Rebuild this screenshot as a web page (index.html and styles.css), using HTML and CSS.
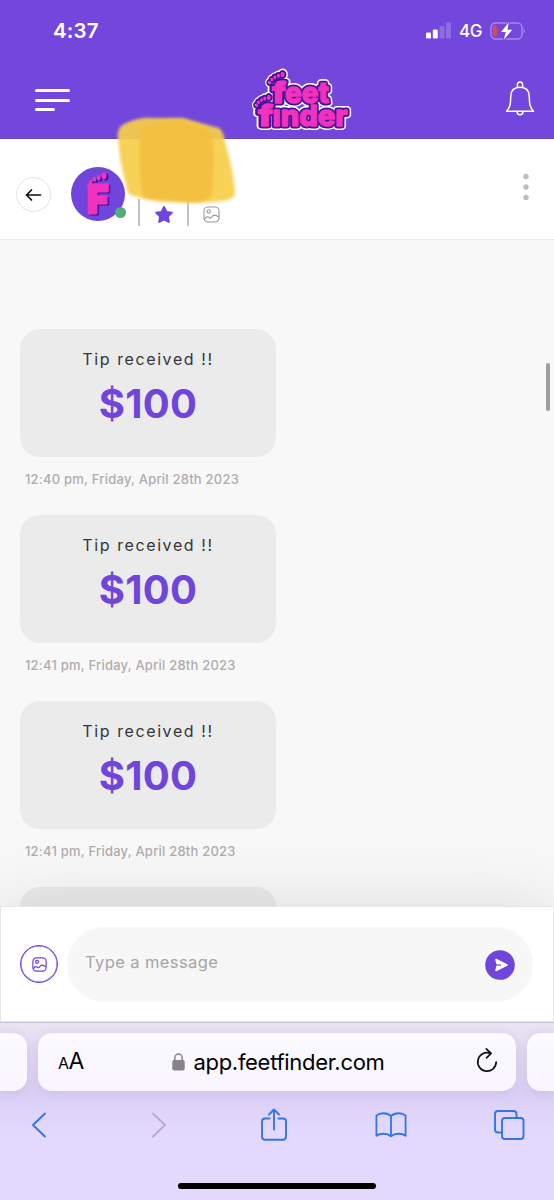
FILE: index.html
```html
<!DOCTYPE html>
<html lang="en">
<head>
<meta charset="utf-8">
<title>FeetFinder messages</title>
<link rel="stylesheet" href="styles.css">
</head>
<body>
<div class="phone">
  <header class="top">
    <div class="status">
      <span class="clock">4:37</span>
      <div class="status-right">
        <svg width="26" height="17" viewBox="0 0 26 17" fill="#fff"><rect x="0" y="10.5" width="5" height="6" rx="1.2"/><rect x="6.8" y="7.5" width="5" height="9" rx="1.2"/><g opacity=".2"><rect x="13.5" y="4" width="5" height="12.5" rx="1.2"/><rect x="20" y=".5" width="5" height="16" rx="1.2"/></g></svg>
        <span class="network">4G</span>
        <svg width="36" height="20" viewBox="0 0 36 20"><rect x="1" y="2" width="31" height="16" rx="4.5" fill="none" stroke="#a68be8" stroke-width="1.4"/><path d="M33.5 7.5q3 2.5 0 5z" fill="#a68be8"/><rect x="3" y="4.2" width="3.7" height="11.6" rx="1.8" fill="#e9493e"/><path d="M19 1.3 11 11h4.7L13.8 18.7 22.2 8.8h-4.8z" fill="#fff" stroke="#7347dc" stroke-width="2.4" paint-order="stroke"/></svg>
      </div>
    </div>
    <nav class="brandbar">
      <div class="burger"><i></i><i></i><i></i></div>
      <svg class="logo" width="104" height="70" viewBox="250 64 104 70">
        <defs>
          <g id="wordmark">
            <ellipse cx="269.800" cy="82.500" rx=".7" ry="1"/><ellipse cx="271.900" cy="79.600" rx=".8" ry="1.100"/><ellipse cx="274.900" cy="77.300" rx=".9" ry="1.200"/><ellipse cx="278.400" cy="75.800" rx="1" ry="1.400"/><ellipse cx="282.600" cy="74.500" rx="1.400" ry="2"/>
            <ellipse cx="256.600" cy="105" rx=".7" ry="1"/><ellipse cx="258.500" cy="102.200" rx=".8" ry="1.100"/><ellipse cx="261.400" cy="100" rx=".9" ry="1.200"/><ellipse cx="264.800" cy="98.600" rx="1" ry="1.400"/><ellipse cx="268.800" cy="97.400" rx="1.300" ry="1.900"/>
            <text x="272" y="103" font-size="29" textLength="14" lengthAdjust="spacingAndGlyphs">f</text>
            <text x="285" y="103" font-size="29" textLength="44" lengthAdjust="spacingAndGlyphs">eet</text>
            <text x="258" y="126" font-size="28" textLength="15" lengthAdjust="spacingAndGlyphs">f</text>
            <text x="272.500" y="126" font-size="29" textLength="75" lengthAdjust="spacingAndGlyphs">ınder</text>
          </g>
        </defs>
        <g class="logo-type">
          <use href="#wordmark" fill="#fff" stroke="#fff" stroke-width="7.800"/>
          <use href="#wordmark" fill="#42109a" stroke="#42109a" stroke-width="5"/>
          <use href="#wordmark" fill="#f032bd" stroke="#f032bd" stroke-width="1.300"/>
        </g>
      </svg>
      <svg class="bell" width="30" height="36" viewBox="0 0 30 36" fill="none" stroke="#fff" stroke-width="1.5" stroke-linejoin="round"><path d="M12.4 6.2V3.7a2.6 2.6 0 0 1 5.2 0v2.5M1.500 30.200c3.400-3.700 4.200-6.600 4.200-14.500C5.700 9.500 9 6.200 15 6.200s9.300 3.300 9.300 9.500c0 7.900.8 10.800 4.200 14.500zM12 30.500a3 3.200 0 0 0 6 0"/></svg>
    </nav>
  </header>

  <section class="contact">
    <button class="back"><svg width="17" height="14" viewBox="0 0 17 14" fill="none" stroke="#111" stroke-width="1.7" stroke-linecap="round" stroke-linejoin="round"><path d="M15.500 7H1.500M6.500 2l-5 5 5 5"/></svg></button>
    <div class="avatar">
      <svg width="54" height="54" viewBox="0 0 54 54">
        <defs><g id="foot"><g stroke-width=".4"><ellipse cx="17.500" cy="18.200" rx="1.200" ry="2"/><ellipse cx="20" cy="14.900" rx="1.400" ry="2.100"/><ellipse cx="23.500" cy="12.300" rx="1.700" ry="2.300"/><ellipse cx="27.700" cy="10.600" rx="1.900" ry="2.600"/><ellipse cx="33" cy="8.800" rx="2.500" ry="3.400"/></g><text x="16" y="45.500" font-size="38" textLength="21" lengthAdjust="spacingAndGlyphs">F</text></g></defs>
        <circle cx="27" cy="27" r="27" fill="#7045db"/>
        <g class="avatar-type"><use href="#foot" x="1.800" y="1.200" fill="#42109a" stroke="#42109a" stroke-width="3"/><use href="#foot" fill="#f032bd" stroke="#f032bd" stroke-width="3"/></g>
      </svg>
      <i class="online"></i>
    </div>
    <div class="tools">
      <i class="divider"></i>
      <svg width="20" height="19" viewBox="0 0 20 19"><path d="M10 2l2.400 4.900 5.400.8-3.900 3.800.9 5.400L10 14.400l-4.800 2.500.9-5.400-3.900-3.800 5.400-.8z" fill="#7045db" stroke="#7045db" stroke-width="2" stroke-linejoin="round"/></svg>
      <i class="divider"></i>
      <svg width="17" height="17" viewBox="0 0 17 17" fill="none" stroke="#999" stroke-width="1.100"><rect x="1" y="1" width="15" height="15" rx="4"/><circle cx="5.700" cy="5.500" r="1.700"/><path d="M1.300 13.500c2-3 3.600-3.500 5.200-1.500 1.300.7 1.900-.6 3-2 1.600-1.700 3-1.400 6.300 1"/></svg>
    </div>
    <svg class="more" width="6" height="28" viewBox="0 0 6 28" fill="#bdbdbd"><circle cx="3" cy="3.500" r="2.700"/><circle cx="3" cy="14" r="2.700"/><circle cx="3" cy="24.500" r="2.700"/></svg>
    <svg class="scribble" width="130" height="104" viewBox="112 108 130 104">
      <defs><filter id="soft"><feGaussianBlur stdDeviation="1.500"/></filter></defs>
      <path d="M118 139Q116 127 126 123Q140 117 153 118L183 118Q204 124 219 128Q224 132 225 142Q233 168 235 192Q235 200 222 201Q200 204 174 202Q151 202 134 196Q126 194 126 184Q120 165 118 139Z" fill="#f8cf4b" opacity=".93" filter="url(#soft)"/>
      <path d="M140 130Q155 119 183 120Q207 126 213 139Q215 165 212 192Q211 203 190 202Q155 200 143 197Q138 170 140 130Z" fill="#f3bf40" opacity=".93" filter="url(#soft)"/>
    </svg>
  </section>

  <main class="messages">
    <article class="message"><div class="tip"><p>Tip received !!</p><strong>$100</strong></div><time>12:40 pm, Friday, April 28th 2023</time></article>
    <article class="message"><div class="tip"><p>Tip received !!</p><strong>$100</strong></div><time>12:41 pm, Friday, April 28th 2023</time></article>
    <article class="message"><div class="tip"><p>Tip received !!</p><strong>$100</strong></div><time>12:41 pm, Friday, April 28th 2023</time></article>
    <article class="message"><div class="tip"></div></article>
    <i class="scrollbar"></i>
  </main>

  <section class="composer">
    <button class="attach"><svg width="15" height="15" viewBox="0 0 17 17" fill="none" stroke="#7045db" stroke-width="1.400"><rect x="1" y="1" width="15" height="15" rx="4"/><circle cx="5.700" cy="5.500" r="1.700"/><path d="M1.300 13.500c2-3 3.600-3.500 5.200-1.500 1.300.7 1.900-.6 3-2 1.600-1.700 3-1.400 6.300 1"/></svg></button>
    <div class="field"><span>Type a message</span>
      <svg width="30" height="30" viewBox="0 0 30 30"><circle cx="15" cy="15" r="14.800" fill="#7045db"/><path d="M11 9.500 22 15 11 20.500l1.200-4.700 4.300-.8-4.300-.8z" fill="#fff" stroke="#fff" stroke-width="1.600" stroke-linejoin="round"/><path d="M10.500 15h5.500" stroke="#7045db" stroke-width="1.200"/></svg>
    </div>
  </section>

  <footer class="browser">
    <div class="tabs">
      <div class="tab-edge left"></div>
      <div class="address">
        <span class="aa"><small>A</small>A</span>
        <div class="url"><svg width="13" height="18" viewBox="0 0 13 18"><rect x=".3" y="7" width="12.400" height="10.500" rx="1.800" fill="#85828b"/><path d="M2.800 8V4.800a3.700 3.700 0 0 1 7.400 0V8" fill="none" stroke="#85828b" stroke-width="1.500"/></svg><span>app.feetfinder.com</span></div>
        <svg class="reload" width="22" height="26" viewBox="0 0 22 26" fill="none" stroke="#111" stroke-width="1.700" stroke-linecap="round" stroke-linejoin="round"><path d="M14.200 6.300A9.200 9.200 0 1 0 20.200 15M10.300 1.800l4.800 4.500-4.500 4.500"/></svg>
      </div>
      <div class="tab-edge right"></div>
    </div>
    <div class="actions">
      <svg width="16" height="26" viewBox="0 0 16 26"><path d="M14 1.500 2 13l12 11.500"/></svg>
      <svg class="disabled" width="16" height="26" viewBox="0 0 16 26"><path d="M2 1.500 14 13 2 24.500"/></svg>
      <svg width="26" height="34" viewBox="0 0 26 34"><path d="M8.500 10.500H4Q1 10.500 1 13.500v15Q1 31.700 4 31.700h18q3 0 3-3.200v-15q0-3-3-3h-4.500M13 21.500V1.500M8 6.500l5-5 5 5"/></svg>
      <svg width="32" height="28" viewBox="0 0 34 28"><path d="M17 4.500C13 .6 5 .6 1.500 4v21.500c4-3 11.500-3 15.500.5 4-3.500 11.500-3.500 15.500-.5V4C29 .6 21 .6 17 4.500V26"/></svg>
      <svg width="32" height="32" viewBox="0 0 32 32"><rect x="9" y="9" width="21.500" height="21" rx="3"/><path d="M8.500 23.500H5q-3 0-3-3V5q0-3 3-3h15.500q3 0 3 3v3.500"/></svg>
    </div>
    <i class="home"></i>
  </footer>
</div>
</body>
</html>
```
FILE: styles.css
```css
* { box-sizing: border-box; }
body { margin: 0; font-family: Inter, sans-serif; }
button { padding: 0; background: #fff; }
svg { display: block; flex: none; }
.phone { width: 554px; height: 1200px; display: flex; flex-direction: column; overflow: hidden; background: #f8f8f8; }

.top { height: 139px; flex: none; background: #7347dc; color: #fff; border-bottom: 1px solid #6845bf; }
.status { height: 61px; padding: 0 28px 0 53px; display: flex; align-items: center; justify-content: space-between; }
.clock { font-size: 20.500px; font-weight: 600; letter-spacing: .2px; }
.status-right { display: flex; align-items: center; gap: 7px; }
.network { width: 25px; font-size: 17px; font-weight: 500; letter-spacing: -.3px; margin-right: -1px; }
.brandbar { height: 77px; display: flex; align-items: flex-start; padding: 3px 19px 0 35px; }
.burger { width: 35px; display: flex; flex-direction: column; gap: 6.500px; margin-top: 25px; }
.burger i { height: 3px; background: #fff; border-radius: 2px; }
.burger i:last-child { width: 20px; }
.logo { margin-left: 180px; }
.bell { margin: 17px 0 0 auto; }
.logo-type { font-family: Inter, sans-serif; font-weight: 800; stroke-linejoin: round; }
.avatar-type { font-family: Inter, sans-serif; font-weight: 900; stroke-linejoin: round; }

.contact { position: relative; height: 101px; flex: none; background: #fff; border-bottom: 1px solid #ebebeb; display: flex; align-items: flex-start; padding: 28px 25px 0 16px; }
.back { width: 35px; height: 35px; margin-top: 10px; border: 1px solid #e3e3e3; border-radius: 50%; display: flex; align-items: center; justify-content: center; }
.avatar { position: relative; margin-left: 20px; }
.online { position: absolute; right: -1px; bottom: 3px; width: 11px; height: 11px; border-radius: 50%; background: #50ad79; }
.tools { display: flex; align-items: center; margin: 32px 0 0 13px; }
.tools svg { margin: 3px 13px 0 14px; }
.divider { width: 2px; height: 27px; background: #c3c3c3; }
.more { margin: 6px 0 0 auto; }
.scribble { position: absolute; left: 112px; top: -31px; }

.messages { position: relative; height: 666px; flex: none; padding: 89px 20px 0; overflow: hidden; background: #f8f8f8; }
.message { height: 186px; }
.tip { width: 256px; height: 128px; border-radius: 20px; background: #ebebeb; display: flex; flex-direction: column; align-items: center; padding-top: 18px; }
.tip p { margin: 0; font-size: 16px; line-height: 24px; letter-spacing: 1.600px; color: #35353a; }
.tip strong { margin-top: 7px; font-size: 40px; line-height: 52px; letter-spacing: .3px; color: #7045db; }
time { display: block; margin: 12px 0 0 5px; font-size: 13px; line-height: 20px; color: #b0acae; font-weight: 500; white-space: nowrap; letter-spacing: .22px; }
.scrollbar { position: absolute; right: 4px; top: 123px; width: 4px; height: 48px; border-radius: 2px; background: #9e9e9e; }

.composer { position: relative; height: 116px; flex: none; background: #fff; border: 1px solid #e7e7e8; display: flex; align-items: flex-start; padding: 20px 20px 0 19px; box-shadow: 0 0 70px rgba(0,0,0,.12); }
.attach { width: 38px; height: 38px; margin-top: 18px; border: 1.500px solid #7045db; border-radius: 50%; display: flex; align-items: center; justify-content: center; box-shadow: inset 0 0 0 .5px #7045db; }
.field { flex: 1; height: 75px; margin-left: 9px; border-radius: 38px; background: #f7f7f7; padding: 0 18px 0 18px; display: flex; align-items: center; justify-content: space-between; color: #a5a5a5; font-size: 16.500px; letter-spacing: .4px; }
.field span { margin-top: -5px; }

.browser { position: relative; flex: 1; padding-top: 10px; background: linear-gradient(#e9e3f2 0, #dbd0f4 70px, #e3d8fd 110px, #e3d8fd 100%); border-top: 1px solid #cac3d8; }
.tabs { height: 58px; display: flex; gap: 11px; }
.address, .tab-edge { background: linear-gradient(#fcfaff, #f8f5ff); box-shadow: 0 2px 12px rgba(95,70,145,.13); }
.tab-edge { width: 27px; flex: none; }
.left { border-radius: 0 14px 14px 0; }
.right { border-radius: 14px 0 0 14px; }
.address { flex: 1; border-radius: 14px; display: flex; align-items: center; justify-content: space-between; padding: 0 18px 0 20px; }
.aa { font-size: 23px; line-height: 28px; width: 28px; letter-spacing: -.5px; }
.aa small { font-size: 16px; }
.url { display: flex; align-items: center; gap: 8px; margin-right: 5px; font-size: 22px; letter-spacing: -.3px; }
.reload { margin-top: -4px; }
.actions { height: 67px; padding-left: 31px; display: grid; grid-template-columns: 120px 110px 114px 118px 32px; align-items: center; }
.actions svg { fill: none; stroke: #3474e3; stroke-width: 1.900; stroke-linecap: round; stroke-linejoin: round; }
.actions .disabled { stroke: #b8aac9; }
.home { position: absolute; left: 178px; bottom: 11px; width: 198px; height: 6px; border-radius: 4px; background: #000; }
```
